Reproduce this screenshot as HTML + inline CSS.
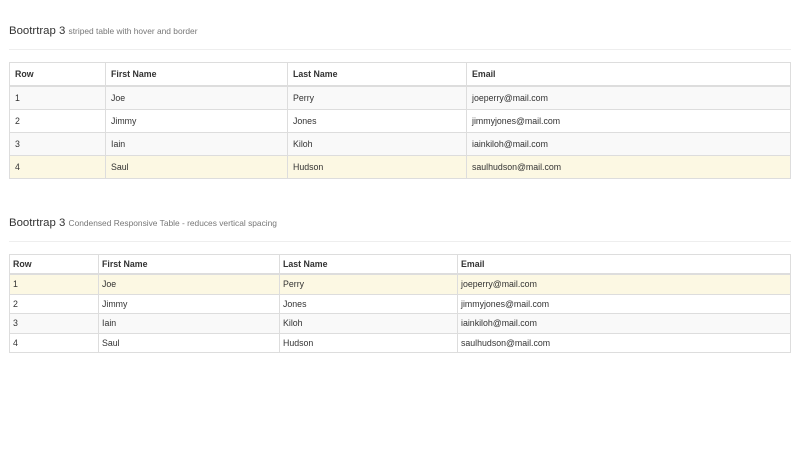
<!DOCTYPE html>
<html><head><style>
body{margin:0;background:#fff;font-family:"Liberation Sans",sans-serif;color:#333;font-size:8.8px}
h1{position:absolute;left:9px;margin:0;font-weight:normal;font-size:11.4px;color:#333}
h1 small{font-size:8.4px;color:#777}
.hr{position:absolute;left:9px;width:782px;height:1px;background:#eee}
table{position:absolute;left:9px;width:782px;border-collapse:collapse;table-layout:fixed}
td,th{border:1px solid #ddd;text-align:left;padding:0 0 0 5px}
th{font-weight:bold;border-bottom:2px solid #ddd}
.t1 th{height:22px}.t1 td{height:22px}
.t2 th{height:18px}.t2 td{height:18.5px;padding-left:3px}.t2 th{padding-left:3px}
.s{background:#f9f9f9}.w{background:#fcf8e3}
</style></head><body>
<h1 style="top:25px">Bootrtrap 3 <small>striped table with hover and border</small></h1>
<div class="hr" style="top:49px"></div>
<table class="t1" style="top:62px">
<colgroup><col style="width:96px"><col style="width:182px"><col style="width:179px"><col></colgroup>
<tr><th>Row</th><th>First Name</th><th>Last Name</th><th>Email</th></tr>
<tr class="s"><td>1</td><td>Joe</td><td>Perry</td><td>joeperry@mail.com</td></tr>
<tr><td>2</td><td>Jimmy</td><td>Jones</td><td>jimmyjones@mail.com</td></tr>
<tr class="s"><td>3</td><td>Iain</td><td>Kiloh</td><td>iainkiloh@mail.com</td></tr>
<tr class="w"><td>4</td><td>Saul</td><td>Hudson</td><td>saulhudson@mail.com</td></tr>
</table>
<h1 style="top:217px">Bootrtrap 3 <small>Condensed Responsive Table - reduces vertical spacing</small></h1>
<div class="hr" style="top:241px"></div>
<table class="t2" style="top:254px">
<colgroup><col style="width:89px"><col style="width:181px"><col style="width:178px"><col></colgroup>
<tr><th>Row</th><th>First Name</th><th>Last Name</th><th>Email</th></tr>
<tr class="w"><td>1</td><td>Joe</td><td>Perry</td><td>joeperry@mail.com</td></tr>
<tr><td>2</td><td>Jimmy</td><td>Jones</td><td>jimmyjones@mail.com</td></tr>
<tr class="s"><td>3</td><td>Iain</td><td>Kiloh</td><td>iainkiloh@mail.com</td></tr>
<tr><td>4</td><td>Saul</td><td>Hudson</td><td>saulhudson@mail.com</td></tr>
</table>
</body></html>
